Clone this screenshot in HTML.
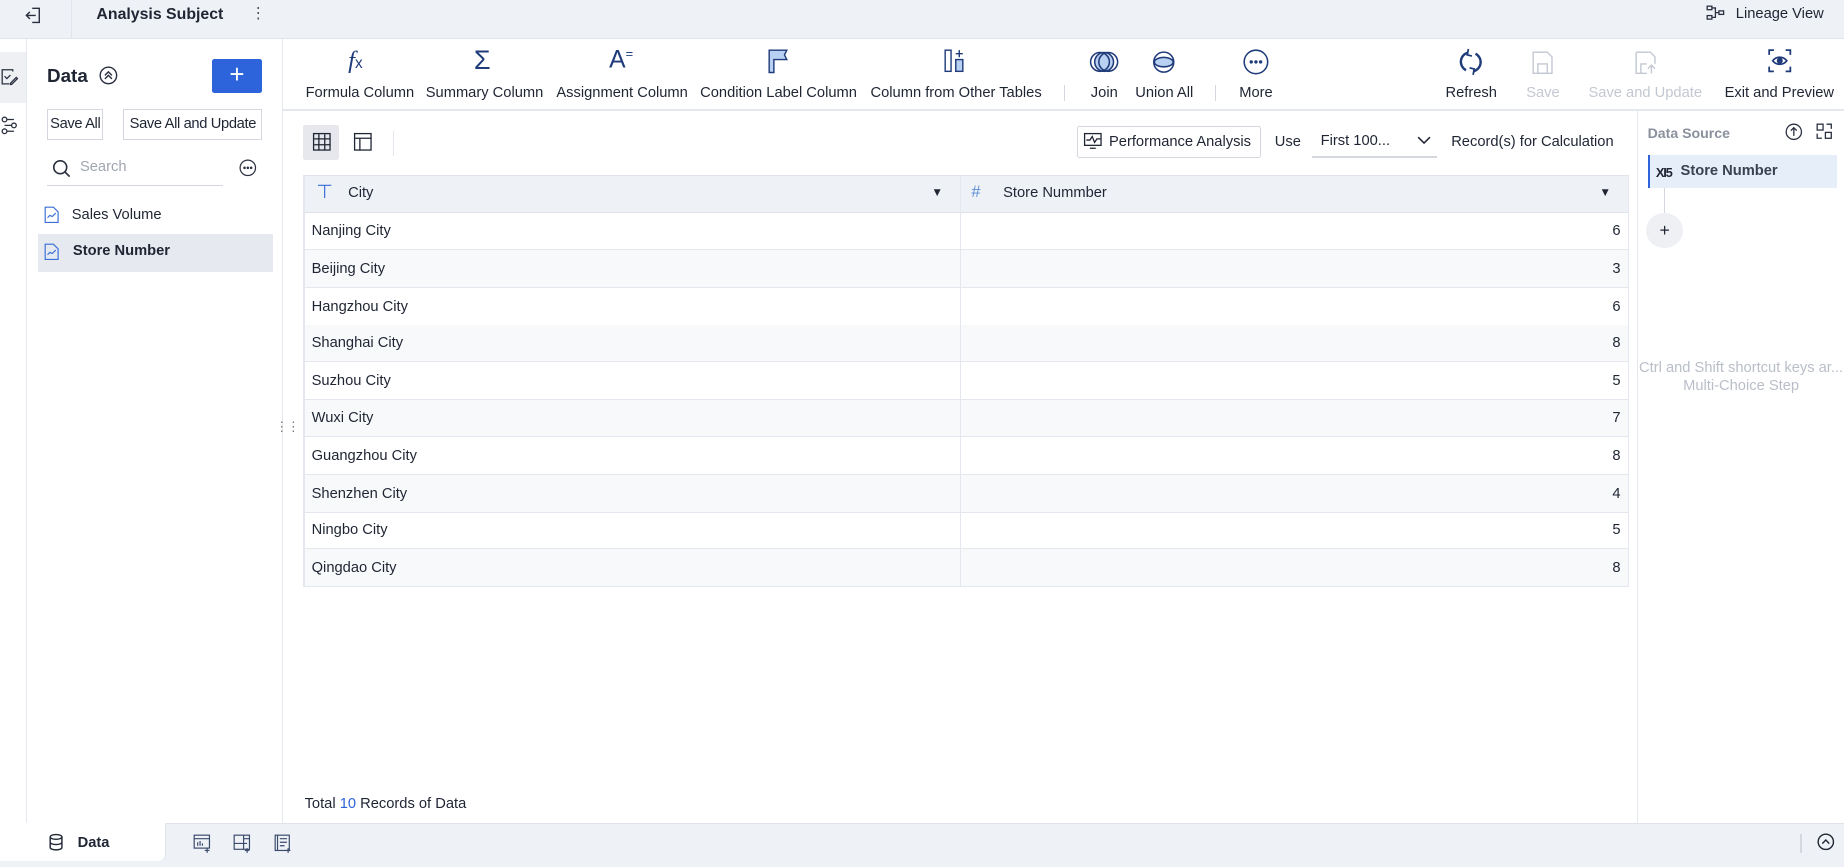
<!DOCTYPE html>
<html><head><meta charset="utf-8"><style>
html,body{margin:0;padding:0;overflow:hidden;background:#fff}
#w{zoom:1.17602;width:1568px;height:737px;position:relative;font-family:"Liberation Sans",Arial,sans-serif;color:#1f2533;font-size:12.5px;overflow:hidden}
.a{position:absolute;white-space:nowrap}
svg{position:absolute;overflow:visible}
.btn{position:absolute;border:1px solid #d4d7de;background:#fff;font-size:12.5px;line-height:24px;text-align:center;box-sizing:border-box;white-space:nowrap;overflow:hidden}
.row{position:absolute;left:258px;width:1127px;height:32px;border-bottom:1px solid #e4e7ed;box-sizing:border-box}
.row span{position:absolute;top:9px}
.row .l{left:7px}.row .r{right:7px}
.tl{position:absolute;top:72px;font-size:12.5px;transform:translateX(-50%);white-space:nowrap}
.vl{position:absolute;width:1px;background:#e4e7ed;z-index:2}
</style></head><body><div id="w">
<!-- top bar -->
<div class="a" style="left:0;top:0;width:1568px;height:32px;background:#eef1f6;border-bottom:1px solid #e2e5eb"></div>
<div class="a" style="left:60px;top:0;width:1px;height:32px;background:#e2e5eb"></div>
<svg style="left:20px;top:5px" width="16" height="16" viewBox="0 0 16 16" fill="none" stroke="#2a3040" stroke-width="1.2"><path d="M7 2h6v12H7M2 8h8M5 5L2 8l3 3"/></svg>
<div class="a" style="left:82px;top:5px;font-weight:bold;font-size:13.5px">Analysis Subject</div>
<div class="a" style="left:213px;top:3px;font-size:13px;color:#555">⋮</div>
<svg style="left:1451px;top:4px" width="16" height="14" viewBox="0 0 16 14" fill="none" stroke="#2a3040" stroke-width="1.1"><rect x="1" y="1" width="4" height="3"/><rect x="1" y="9" width="4" height="3"/><path d="M5 2.5h3v8H5M8 6.5h3"/><rect x="11" y="5" width="4" height="3"/></svg>
<div class="a" style="left:1476px;top:5px">Lineage View</div>
<!-- left rail -->
<div class="a" style="left:22px;top:33px;width:1px;height:667px;background:#e4e7ed"></div>
<div class="a" style="left:0;top:44px;width:22px;height:44px;background:#eef0f4"></div>
<svg style="left:1px;top:58px" width="14" height="15" viewBox="0 0 14 15" fill="none" stroke="#2a3040" stroke-width="1.1"><path d="M10 3V1.5H1v12h6M3 7l2 2 3-3M8 13l5-5 1 1-5 5H8z"/></svg>
<svg style="left:1px;top:99px" width="14" height="16" viewBox="0 0 14 16" fill="none" stroke="#2a3040" stroke-width="1.1"><circle cx="3" cy="3" r="2"/><circle cx="11" cy="8" r="2"/><circle cx="3" cy="13" r="2"/><path d="M5 3h6M9 8H3M5 13h6"/></svg>
<!-- left panel -->
<div class="a" style="left:240px;top:33px;width:1px;height:667px;background:#e4e7ed"></div>
<div class="a" style="left:40px;top:55px;font-weight:bold;font-size:16px">Data</div>
<svg style="left:84px;top:56px" width="16" height="16" viewBox="0 0 16 16" fill="none" stroke="#2a3040" stroke-width="1.2"><circle cx="8" cy="8" r="7"/><path d="M5 8l3-3 3 3M5 11l3-3 3 3"/></svg>
<div class="a" style="left:180px;top:50px;width:43px;height:29px;background:#2d63db;border-radius:2px;color:#fff;font-size:22px;text-align:center;line-height:28px">+</div>
<div class="btn" style="left:40px;top:93px;width:48px;height:26px;letter-spacing:-.3px">Save All</div>
<div class="btn" style="left:105px;top:93px;width:118px;height:26px;letter-spacing:-.3px">Save All and Update</div>
<svg style="left:44px;top:135px" width="16" height="16" viewBox="0 0 16 16" fill="none" stroke="#2a3040" stroke-width="1.4"><circle cx="7" cy="7" r="5.5"/><path d="M11 11l4 4"/></svg>
<div class="a" style="left:68px;top:135px;color:#a0a5b0">Search</div>
<div class="a" style="left:40px;top:157px;width:150px;height:1px;background:#d4d7de"></div>
<svg style="left:203px;top:135px" width="15" height="15" viewBox="0 0 16 16" fill="none" stroke="#2a3040" stroke-width="1.1"><circle cx="8" cy="8" r="7"/><circle cx="5" cy="8" r=".6" fill="#2a3040"/><circle cx="8" cy="8" r=".6" fill="#2a3040"/><circle cx="11" cy="8" r=".6" fill="#2a3040"/></svg>
<svg style="left:37px;top:175px" width="13" height="15" viewBox="0 0 13 15" fill="none" stroke="#3a6fd8" stroke-width="1"><path d="M1 1h7l4 4v9H1zM3 10l2-2 2 1 3-3"/></svg>
<div class="a" style="left:61px;top:176px">Sales Volume</div>
<div class="a" style="left:32px;top:199px;width:200px;height:32px;background:#e6e9f0"></div>
<svg style="left:37px;top:207px" width="13" height="15" viewBox="0 0 13 15" fill="none" stroke="#3a6fd8" stroke-width="1"><path d="M1 1h7l4 4v9H1zM3 10l2-2 2 1 3-3"/></svg>
<div class="a" style="left:62px;top:207px;font-weight:bold">Store Number</div>
<div class="a" style="left:234px;top:360px;color:#777;font-size:11px;letter-spacing:-1px;line-height:6px">⋮⋮</div>
<!-- toolbar -->
<div class="a" style="left:241px;top:93px;width:1327px;height:1px;background:#e4e7ed"></div>
<div class="a" style="left:296px;top:40px;font-family:'Liberation Serif',serif;font-style:italic;font-size:21px;color:#1f3b7a">f<span style="font-size:13px;font-style:normal;font-family:'Liberation Sans'">x</span></div>
<div class="a" style="left:403px;top:38px;font-size:23px;color:#1f3b7a">Σ</div>
<div class="a" style="left:518px;top:39px;font-size:21px;color:#1f3b7a">A<span style="font-size:11px;vertical-align:8px">=</span></div>
<svg style="left:653px;top:42px" width="18" height="21" viewBox="0 0 18 21" stroke="#1f3b7a" stroke-width="1.2"><path d="M1 1h15l-2 4 2 4H5v11H1z" fill="#b8d0f2"/></svg>
<svg style="left:803px;top:42px" width="20" height="21" viewBox="0 0 20 21" fill="none" stroke="#1f3b7a" stroke-width="1.2"><rect x="1" y="1" width="5" height="18"/><rect x="10" y="9" width="6" height="10" fill="#b8d0f2"/><path d="M13 1v6M10 4h6"/></svg>
<div class="tl" style="left:306px">Formula Column</div>
<div class="tl" style="left:412px">Summary Column</div>
<div class="tl" style="left:529px">Assignment Column</div>
<div class="tl" style="left:662px">Condition Label Column</div>
<div class="tl" style="left:813px">Column from Other Tables</div>
<div class="a" style="left:905px;top:72px;width:1px;height:14px;background:#d4d7de"></div>
<svg style="left:927px;top:42px" width="24" height="22" viewBox="0 0 24 22" fill="none" stroke="#1f3b7a" stroke-width="1.3"><path d="M12 3a7 7 0 0 1 0 16a7 7 0 0 1 0-16z" fill="#b8d0f2"/><circle cx="8.5" cy="11" r="8"/><circle cx="15.5" cy="11" r="8"/></svg>
<svg style="left:980px;top:41px" width="20" height="24" viewBox="0 0 20 24" fill="none" stroke="#1f3b7a" stroke-width="1.3"><circle cx="10" cy="12" r="8.5"/><ellipse cx="10" cy="12" rx="8" ry="4" fill="#b8d0f2"/></svg>
<svg style="left:1057px;top:42px" width="22" height="22" viewBox="0 0 22 22" fill="none" stroke="#1f3b7a" stroke-width="1.3"><circle cx="11" cy="11" r="10"/><circle cx="7" cy="11" r=".8" fill="#1f3b7a"/><circle cx="11" cy="11" r=".8" fill="#1f3b7a"/><circle cx="15" cy="11" r=".8" fill="#1f3b7a"/></svg>
<div class="tl" style="left:939px">Join</div>
<div class="tl" style="left:990px">Union All</div>
<div class="a" style="left:1033px;top:72px;width:1px;height:14px;background:#d4d7de"></div>
<div class="tl" style="left:1068px">More</div>
<svg style="left:1241px;top:42px" width="20" height="22" viewBox="0 0 20 22" fill="none" stroke="#1f3b7a" stroke-width="2"><path d="M8 3A8 8 0 0 0 6 18M12 19A8 8 0 0 0 14 4"/><path d="M8 0l-1 5 4 1M12 22l1-5-4-1" stroke-width="1.5"/></svg>
<svg style="left:1303px;top:43px" width="18" height="20" viewBox="0 0 18 20" fill="none" stroke="#c3c8d2" stroke-width="1.2"><path d="M1 1h12l4 4v14H1z"/><rect x="5" y="11" width="8" height="8"/></svg>
<svg style="left:1390px;top:43px" width="18" height="20" viewBox="0 0 18 20" fill="none" stroke="#c3c8d2" stroke-width="1.2"><path d="M1 1h12l4 4v6M10 19H1V1M5 19v-8h5M14 19v-7M11 15l3-3 3 3"/></svg>
<svg style="left:1503px;top:42px" width="20" height="20" viewBox="0 0 20 20" fill="none" stroke="#1f3b7a" stroke-width="1.5"><path d="M1 5V1h4M15 1h4v4M19 15v4h-4M5 19H1v-4"/><path d="M4 10c3-4 9-4 12 0c-3 4-9 4-12 0z"/><circle cx="10" cy="10" r="1.8" fill="#1f3b7a"/></svg>
<div class="tl" style="left:1251px">Refresh</div>
<div class="tl" style="left:1312px;color:#c3c8d2">Save</div>
<div class="tl" style="left:1399px;color:#c3c8d2">Save and Update</div>
<div class="tl" style="left:1513px">Exit and Preview</div>
<!-- second row -->
<div class="a" style="left:258px;top:106px;width:30px;height:30px;background:#e6e8ed;border-radius:2px"></div>
<svg style="left:266px;top:113px" width="15" height="15" viewBox="0 0 15 15" fill="none" stroke="#1f2533" stroke-width="1.1"><rect x=".5" y=".5" width="14" height="14"/><path d="M5 1v14M10 1v14M1 5h14M1 10h14"/></svg>
<svg style="left:301px;top:113px" width="15" height="15" viewBox="0 0 15 15" fill="none" stroke="#1f2533" stroke-width="1.1"><rect x=".5" y=".5" width="14" height="14"/><path d="M1 4.5h14M5 5v10"/></svg>
<div class="a" style="left:334px;top:111px;width:1px;height:22px;background:#e4e7ed"></div>
<div class="a" style="left:916px;top:107px;width:156px;height:27px;border:1px solid #d4d7de;box-sizing:border-box;border-radius:2px"></div>
<svg style="left:922px;top:113px" width="15" height="14" viewBox="0 0 15 14" fill="none" stroke="#1f2533" stroke-width="1.1"><rect x=".5" y=".5" width="14" height="10"/><path d="M2 6h3l2-3 2 5 2-3h3M5 13h5"/></svg>
<div class="a" style="left:943px;top:114px">Performance Analysis</div>
<div class="a" style="left:1084px;top:114px">Use</div>
<div class="a" style="left:1116px;top:133px;width:106px;height:1px;background:#d4d7de"></div>
<div class="a" style="left:1123px;top:113px">First 100...</div>
<svg style="left:1205px;top:116px" width="12" height="8" viewBox="0 0 12 8" fill="none" stroke="#1f2533" stroke-width="1.3"><path d="M1 1l5 5 5-5"/></svg>
<div class="a" style="left:1234px;top:114px">Record(s) for Calculation</div>
<!-- table -->
<div class="a" style="left:258px;top:149px;width:1127px;height:32px;background:#eef1f6;border:1px solid #dfe2e8;box-sizing:border-box"></div>
<div class="a" style="left:269px;top:154px;color:#3a6fd8;font-size:16px">⊤</div>
<div class="a" style="left:296px;top:157px">City</div>
<div class="a" style="left:792px;top:158px;font-size:10px">▼</div>
<div class="a" style="left:826px;top:156px;color:#5b8fd8;font-size:14px">#</div>
<div class="a" style="left:853px;top:157px">Store Nummber</div>
<div class="a" style="left:1360px;top:158px;font-size:10px">▼</div>
<div class="row" style="top:181px"><span class="l">Nanjing City</span><span class="r">6</span></div>
<div class="row" style="top:213px;background:#f8f9fb"><span class="l">Beijing City</span><span class="r">3</span></div>
<div class="row" style="top:245px"><span class="l">Hangzhou City</span><span class="r">6</span></div>
<div class="row" style="top:276px;background:#f8f9fb"><span class="l">Shanghai City</span><span class="r">8</span></div>
<div class="row" style="top:308px"><span class="l">Suzhou City</span><span class="r">5</span></div>
<div class="row" style="top:340px;background:#f8f9fb"><span class="l">Wuxi City</span><span class="r">7</span></div>
<div class="row" style="top:372px"><span class="l">Guangzhou City</span><span class="r">8</span></div>
<div class="row" style="top:404px;background:#f8f9fb"><span class="l">Shenzhen City</span><span class="r">4</span></div>
<div class="row" style="top:435px"><span class="l">Ningbo City</span><span class="r">5</span></div>
<div class="row" style="top:467px;background:#f8f9fb"><span class="l">Qingdao City</span><span class="r">8</span></div>
<div class="vl" style="left:816px;top:149px;height:350px"></div>
<div class="vl" style="left:258px;top:149px;height:350px"></div>
<div class="vl" style="left:1384px;top:149px;height:350px"></div>
<div class="a" style="left:259px;top:677px">Total <span style="color:#2d63db">10</span> Records of Data</div>
<!-- right panel -->
<div class="a" style="left:1392px;top:94px;width:1px;height:606px;background:#e4e7ed"></div>
<div class="a" style="left:1401px;top:106px;font-weight:bold;font-size:12px;color:#8a909c">Data Source</div>
<svg style="left:1518px;top:105px" width="15" height="15" viewBox="0 0 15 15" fill="none" stroke="#2a3040" stroke-width="1.1"><circle cx="7.5" cy="7.5" r="6.5"/><path d="M7.5 11V4M5 6.5l2.5-2.5 2.5 2.5"/></svg>
<svg style="left:1544px;top:105px" width="14" height="14" viewBox="0 0 14 14" fill="none" stroke="#2a3040" stroke-width="1.1"><rect x="1" y="1" width="5" height="5"/><rect x="8" y="8" width="5" height="5"/><path d="M9 1h4v4M1 9v4h4"/></svg>
<div class="a" style="left:1401px;top:132px;width:161px;height:28px;background:#e6eefa;border-left:2px solid #2d63db;box-sizing:border-box"></div>
<div class="a" style="left:1408px;top:140px;font-size:11px;font-weight:bold;letter-spacing:-1px">XI5</div>
<div class="a" style="left:1429px;top:139px;font-weight:bold;font-size:12.5px;color:#3a4150">Store Number</div>
<div class="a" style="left:1415px;top:160px;width:1px;height:22px;background:#d4d7de"></div>
<div class="a" style="left:1400px;top:181px;width:31px;height:30px;border-radius:50%;background:#eef0f4;text-align:center;line-height:29px;font-size:15px">+</div>
<div class="a" style="left:1393px;top:306px;width:175px;overflow:hidden;color:#b9bec8;font-size:12.5px;text-align:center;line-height:15px">Ctrl and Shift shortcut keys ar...<br>Multi-Choice Step</div>
<!-- bottom bar -->
<div class="a" style="left:0;top:700px;width:1568px;height:37px;background:#eef1f6;border-top:1px solid #dfe2e8"></div>
<div class="a" style="left:0;top:700px;width:140px;height:32px;background:#fff;border-radius:0 0 6px 0;border-right:1px solid #dfe2e8"></div>
<svg style="left:42px;top:709px" width="12" height="14" viewBox="0 0 12 14" fill="none" stroke="#1f2533" stroke-width="1.2"><ellipse cx="6" cy="2.5" rx="5" ry="2"/><path d="M1 2.5v9c0 1.1 2.2 2 5 2s5-.9 5-2v-9M1 7c0 1.1 2.2 2 5 2s5-.9 5-2"/></svg>
<div class="a" style="left:66px;top:710px;font-weight:bold">Data</div>
<svg style="left:164px;top:709px" width="16" height="16" viewBox="0 0 16 16" fill="none" stroke="#3a4a6a" stroke-width="1"><rect x="1" y="1" width="13" height="11"/><path d="M1 4h13M4 10V7M6 10V6M8 10V8M12 12v4M10 14h4"/></svg>
<svg style="left:198px;top:709px" width="16" height="16" viewBox="0 0 16 16" fill="none" stroke="#3a4a6a" stroke-width="1"><rect x="1" y="1" width="13" height="12"/><path d="M1 8h11M9 1v12M9 4h5M12 12v4M10 14h4"/></svg>
<svg style="left:233px;top:709px" width="16" height="16" viewBox="0 0 16 16" fill="none" stroke="#3a4a6a" stroke-width="1"><rect x="1" y="1" width="12" height="13"/><path d="M3 1v13M5 4h6M5 7h6M5 10h4M12 12v4M10 14h4"/></svg>
<div class="a" style="left:1531px;top:709px;width:1px;height:16px;background:#d4d7de"></div>
<svg style="left:1545px;top:708px" width="15" height="15" viewBox="0 0 15 15" fill="none" stroke="#1f2533" stroke-width="1.2"><circle cx="7.5" cy="7.5" r="6.5"/><path d="M4.5 9l3-3 3 3"/></svg>
</div></body></html>
